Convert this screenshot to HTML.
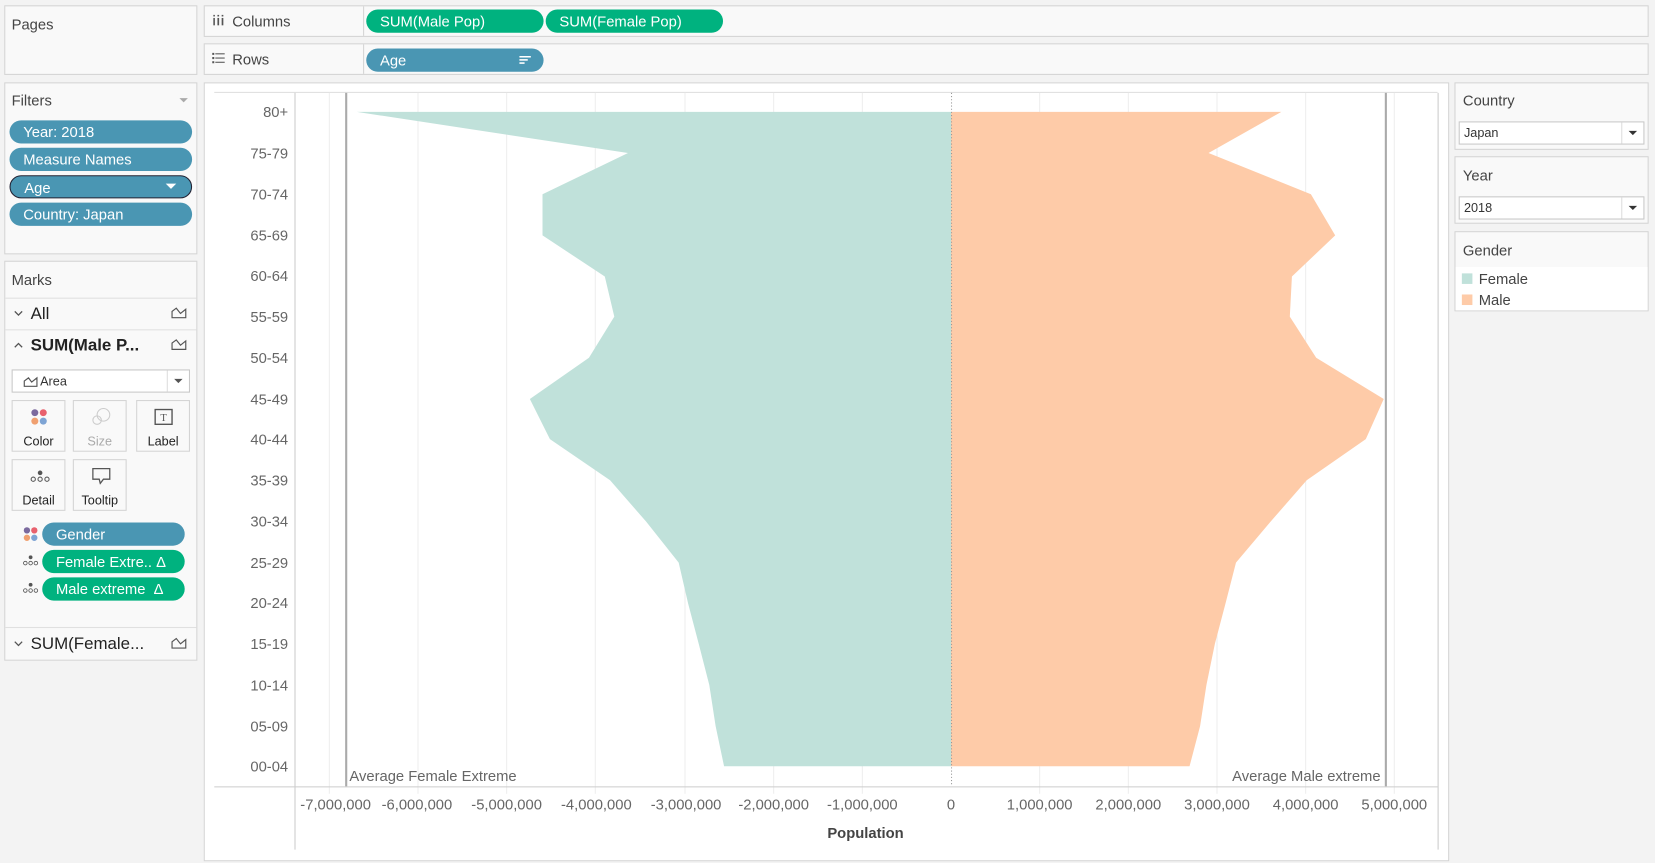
<!DOCTYPE html>
<html><head><meta charset="utf-8"><style>
html,body{margin:0;padding:0;background:#f3f3f3;overflow:hidden;width:1655px;height:863px}
#w{position:absolute;left:0;top:0;width:1568px;height:818px;transform:scale(1.05549);transform-origin:0 0;font-family:"Liberation Sans",sans-serif;color:#333}
.a{position:absolute}
.p{position:absolute;background:#f9f9f9;border:1px solid #d4d4d4;box-sizing:border-box}
.t{position:absolute;font-size:14px;color:#444}
.pill{position:absolute;height:22px;border-radius:11px;color:#fff;font-size:14px;line-height:22px;padding-left:13px;box-sizing:border-box;white-space:nowrap}
.b{background:#4a96b3}.g{background:#00b27f}
.row{position:absolute;left:0;right:0;border-top:1px solid #e0e0e0;font-size:16px;color:#222}
.btn{position:absolute;width:51px;height:49px;border:1px solid #d4d4d4;box-sizing:border-box;font-size:12px;text-align:center;color:#222}
.lab{position:absolute;font-size:14px;color:#666;width:60px;text-align:right}
.tk{position:absolute;font-size:14px;color:#666;top:754px;width:100px;text-align:center}
.dd{position:absolute;background:#fff;border:1px solid #c8c8c8;height:22px;box-sizing:border-box;font-size:12px;line-height:20px;padding-left:4px}
.ai{position:absolute;right:9px}
</style></head><body><div id="w">
<div class="p" style="left:4px;top:5px;width:183px;height:66px"><div class="t" style="left:6px;top:9px">Pages</div></div>
<div class="p" style="left:193px;top:5px;width:1369px;height:30px">
 <div class="a" style="left:150px;top:0;width:1px;height:28px;background:#d4d4d4"></div>
 <svg class="a" style="left:8px;top:8px" width="10" height="11"><g fill="#555"><rect x="0" y="0" width="1.6" height="1.6"/><rect x="4" y="0" width="1.6" height="1.6"/><rect x="8" y="0" width="1.6" height="1.6"/><rect x="0" y="3" width="1.6" height="7"/><rect x="4" y="3" width="1.6" height="7"/><rect x="8" y="3" width="1.6" height="7"/></g></svg>
 <div class="t" style="left:26px;top:6px">Columns</div>
 <div class="pill g" style="left:153px;top:3px;width:168px">SUM(Male Pop)</div>
 <div class="pill g" style="left:323px;top:3px;width:168px">SUM(Female Pop)</div>
</div>
<div class="p" style="left:193px;top:41px;width:1369px;height:30px">
 <div class="a" style="left:150px;top:0;width:1px;height:28px;background:#d4d4d4"></div>
 <svg class="a" style="left:7px;top:8px" width="12" height="10"><g fill="#555"><rect x="0" y="0" width="2" height="2"/><rect x="3" y="0.5" width="9" height="1"/><rect x="0" y="4" width="2" height="2"/><rect x="3" y="4.5" width="9" height="1"/><rect x="0" y="8" width="2" height="2"/><rect x="3" y="8.5" width="9" height="1"/></g></svg>
 <div class="t" style="left:26px;top:6px">Rows</div>
 <div class="pill b" style="left:153px;top:4px;width:168px">Age<svg class="a" style="right:12px;top:7px" width="11" height="8"><g fill="#fff"><rect x="0" y="0" width="11" height="1.5"/><rect x="0" y="3" width="8" height="1.5"/><rect x="0" y="6" width="5" height="1.5"/></g></svg></div>
</div>
<div class="p" style="left:4px;top:78px;width:183px;height:163px">
 <div class="t" style="left:6px;top:8px">Filters</div>
 <div class="a" style="right:8px;top:14px;border:4px solid transparent;border-top-color:#aaa"></div>
 <div class="pill b" style="left:4px;top:35px;width:173px">Year: 2018</div>
 <div class="pill b" style="left:4px;top:61px;width:173px">Measure Names</div>
 <div class="pill b" style="left:4px;top:87px;width:173px;border:1px solid #223">Age<span style="position:absolute;right:14px;top:7px;border:5px solid transparent;border-top-color:#fff"></span></div>
 <div class="pill b" style="left:4px;top:113px;width:173px">Country: Japan</div>
</div>
<div class="p" style="left:4px;top:247px;width:183px;height:379px">
 <div class="t" style="left:6px;top:9px">Marks</div>
 <div class="row" style="top:34px;height:28px"><svg class="a" style="left:8px;top:11px" width="9" height="6"><path d="M1 1L4.5 4.5L8 1" fill="none" stroke="#555" stroke-width="1.2"/></svg><span class="a" style="left:24px;top:6px">All</span><svg class="ai" style="top:7px" width="15" height="12"><path d="M1 11V5L5 2L9 7L14 3V11Z" fill="none" stroke="#555" stroke-width="1.1"/></svg></div>
 <div class="row" style="top:64px;height:28px"><svg class="a" style="left:8px;top:11px" width="9" height="6"><path d="M1 5L4.5 1.5L8 5" fill="none" stroke="#555" stroke-width="1.2"/></svg><span class="a" style="left:24px;top:6px;font-weight:bold">SUM(Male P...</span><svg class="ai" style="top:7px" width="15" height="12"><path d="M1 11V5L5 2L9 7L14 3V11Z" fill="none" stroke="#555" stroke-width="1.1"/></svg></div>
 <div class="dd" style="left:6px;top:102px;width:169px;padding-left:26px">Area<svg class="a" style="left:10px;top:5px" width="14" height="11"><path d="M1 10V5L5 2L8 6L13 2V10Z" fill="none" stroke="#555" stroke-width="1.1"/></svg><span style="position:absolute;right:0;top:0;width:20px;height:20px;border-left:1px solid #ddd"><span style="position:absolute;left:6px;top:8px;border:4px solid transparent;border-top-color:#555"></span></span></div>
 <div class="btn" style="left:6px;top:131px"><svg class="a" style="left:17px;top:7px" width="16" height="16"><circle cx="4" cy="4" r="3.3" fill="#7b6a9e"/><circle cx="12" cy="4" r="3.3" fill="#e8616e"/><circle cx="4" cy="12" r="3.3" fill="#f0a070"/><circle cx="12" cy="12" r="3.3" fill="#7ea4d4"/></svg><span class="a" style="left:0;right:0;top:31px">Color</span></div>
 <div class="btn" style="left:64px;top:131px;color:#aaa"><svg class="a" style="left:16px;top:6px" width="20" height="18"><circle cx="12" cy="7" r="6" fill="none" stroke="#ccc"/><circle cx="6" cy="12" r="4" fill="none" stroke="#ccc"/></svg><span class="a" style="left:0;right:0;top:31px">Size</span></div>
 <div class="btn" style="left:124px;top:131px"><svg class="a" style="left:16px;top:7px" width="18" height="16"><rect x="1" y="1" width="16" height="14" fill="none" stroke="#555" stroke-width="1.3"/><text x="9" y="12" font-size="10" text-anchor="middle" font-family="Liberation Serif" fill="#555">T</text></svg><span class="a" style="left:0;right:0;top:31px">Label</span></div>
 <div class="btn" style="left:6px;top:187px"><svg class="a" style="left:16px;top:9px" width="20" height="12"><circle cx="10" cy="3" r="2.2" fill="#555"/><circle cx="3.5" cy="9" r="2" fill="none" stroke="#555"/><circle cx="10" cy="9" r="2" fill="none" stroke="#555"/><circle cx="16.5" cy="9" r="2" fill="none" stroke="#555"/></svg><span class="a" style="left:0;right:0;top:31px">Detail</span></div>
 <div class="btn" style="left:64px;top:187px"><svg class="a" style="left:17px;top:7px" width="18" height="16"><path d="M1 1H17V11H11L8 15L7 11H1Z" fill="none" stroke="#555" stroke-width="1.2"/></svg><span class="a" style="left:0;right:0;top:31px">Tooltip</span></div>
 <svg class="a" style="left:17px;top:251px" width="14" height="14"><circle cx="3.5" cy="3.5" r="3" fill="#7b6a9e"/><circle cx="10.5" cy="3.5" r="3" fill="#e8616e"/><circle cx="3.5" cy="10.5" r="3" fill="#f0a070"/><circle cx="10.5" cy="10.5" r="3" fill="#7ea4d4"/></svg>
 <div class="pill b" style="left:35px;top:247px;width:135px">Gender</div>
 <svg class="a" style="left:16px;top:278px" width="16" height="10"><circle cx="8" cy="2" r="1.8" fill="#555"/><circle cx="3" cy="7.5" r="1.7" fill="none" stroke="#555" stroke-width=".8"/><circle cx="8" cy="7.5" r="1.7" fill="none" stroke="#555" stroke-width=".8"/><circle cx="13" cy="7.5" r="1.7" fill="none" stroke="#555" stroke-width=".8"/></svg>
 <div class="pill g" style="left:35px;top:273px;width:135px">Female Extre.. &#916;</div>
 <svg class="a" style="left:16px;top:304px" width="16" height="10"><circle cx="8" cy="2" r="1.8" fill="#555"/><circle cx="3" cy="7.5" r="1.7" fill="none" stroke="#555" stroke-width=".8"/><circle cx="8" cy="7.5" r="1.7" fill="none" stroke="#555" stroke-width=".8"/><circle cx="13" cy="7.5" r="1.7" fill="none" stroke="#555" stroke-width=".8"/></svg>
 <div class="pill g" style="left:35px;top:299px;width:135px">Male extreme &nbsp;&#916;</div>
 <div class="row" style="top:346px;height:30px"><svg class="a" style="left:8px;top:12px" width="9" height="6"><path d="M1 1L4.5 4.5L8 1" fill="none" stroke="#555" stroke-width="1.2"/></svg><span class="a" style="left:24px;top:7px">SUM(Female...</span><svg class="ai" style="top:8px" width="15" height="12"><path d="M1 11V5L5 2L9 7L14 3V11Z" fill="none" stroke="#555" stroke-width="1.1"/></svg></div>
</div>
<div class="a" style="left:193px;top:78px;width:1180px;height:738px;background:#fff;border:1px solid #d4d4d4;box-sizing:border-box"></div>
<svg class="a" style="left:0;top:0" width="1568" height="818">
 <line x1="203" y1="87.5" x2="1362" y2="87.5" stroke="#ddd"/>
 <line x1="279.5" y1="88" x2="279.5" y2="805" stroke="#ccc"/>
 <line x1="1362.5" y1="88" x2="1362.5" y2="805" stroke="#ccc"/>
 <g stroke="#eee">
  <line x1="312" y1="88" x2="312" y2="752"/><line x1="396" y1="88" x2="396" y2="752"/><line x1="480" y1="88" x2="480" y2="752"/><line x1="564" y1="88" x2="564" y2="752"/><line x1="649" y1="88" x2="649" y2="752"/><line x1="733" y1="88" x2="733" y2="752"/><line x1="817" y1="88" x2="817" y2="752"/><line x1="985" y1="88" x2="985" y2="752"/><line x1="1069" y1="88" x2="1069" y2="752"/><line x1="1153" y1="88" x2="1153" y2="752"/><line x1="1237" y1="88" x2="1237" y2="752"/><line x1="1321" y1="88" x2="1321" y2="752"/>
 </g>
 <polygon fill="#c0e1da" points="901,106 338,106 595,145 514,184 514,223 573,262 582,300 558,339 502,378 521,416 578,455 612,494 643,533 652,572 662,610 672,649 678,688 686,726 901,726"/>
 <polygon fill="#fecba8" points="901,106 1214,106 1145,145 1242,184 1265,223 1224,262 1222,300 1247,339 1311,378 1294,416 1238,455 1204,494 1171,533 1161,572 1151,610 1143,649 1137,688 1127,726 901,726"/>
 <line x1="901.5" y1="88" x2="901.5" y2="745" stroke="#999" stroke-dasharray="1,2"/>
 <line x1="328" y1="88" x2="328" y2="745" stroke="#aaa" stroke-width="2"/>
 <line x1="1313" y1="88" x2="1313" y2="745" stroke="#aaa" stroke-width="2"/>
 <line x1="203" y1="745.5" x2="1362" y2="745.5" stroke="#ccc"/>
</svg>
<div class="lab" style="left:213px;top:98px">80+</div><div class="lab" style="left:213px;top:137px">75-79</div><div class="lab" style="left:213px;top:176px">70-74</div><div class="lab" style="left:213px;top:215px">65-69</div><div class="lab" style="left:213px;top:253px">60-64</div><div class="lab" style="left:213px;top:292px">55-59</div><div class="lab" style="left:213px;top:331px">50-54</div><div class="lab" style="left:213px;top:370px">45-49</div><div class="lab" style="left:213px;top:408px">40-44</div><div class="lab" style="left:213px;top:447px">35-39</div><div class="lab" style="left:213px;top:486px">30-34</div><div class="lab" style="left:213px;top:525px">25-29</div><div class="lab" style="left:213px;top:563px">20-24</div><div class="lab" style="left:213px;top:602px">15-19</div><div class="lab" style="left:213px;top:641px">10-14</div><div class="lab" style="left:213px;top:680px">05-09</div><div class="lab" style="left:213px;top:718px">00-04</div>
<div class="a" style="left:331px;top:727px;font-size:14px;color:#666">Average Female Extreme</div>
<div class="a" style="left:1108px;top:727px;width:200px;text-align:right;font-size:14px;color:#666">Average Male extreme</div>
<div class="tk" style="left:268px">-7,000,000</div><div class="tk" style="left:345px">-6,000,000</div><div class="tk" style="left:430px">-5,000,000</div><div class="tk" style="left:515px">-4,000,000</div><div class="tk" style="left:600px">-3,000,000</div><div class="tk" style="left:683px">-2,000,000</div><div class="tk" style="left:767px">-1,000,000</div><div class="tk" style="left:851px">0</div><div class="tk" style="left:935px">1,000,000</div><div class="tk" style="left:1019px">2,000,000</div><div class="tk" style="left:1103px">3,000,000</div><div class="tk" style="left:1187px">4,000,000</div><div class="tk" style="left:1271px">5,000,000</div>
<div class="a" style="left:770px;top:781px;width:100px;text-align:center;font-size:14px;font-weight:bold;color:#444">Population</div>
<div class="p" style="left:1378px;top:78px;width:184px;height:64px"><div class="t" style="left:7px;top:8px">Country</div><div class="dd" style="left:3px;top:36px;width:176px">Japan<span style="position:absolute;right:0;top:0;width:20px;height:20px;border-left:1px solid #ddd"><span style="position:absolute;left:6px;top:8px;border:4px solid transparent;border-top-color:#333"></span></span></div></div>
<div class="p" style="left:1378px;top:148px;width:184px;height:64px"><div class="t" style="left:7px;top:9px">Year</div><div class="dd" style="left:3px;top:37px;width:176px">2018<span style="position:absolute;right:0;top:0;width:20px;height:20px;border-left:1px solid #ddd"><span style="position:absolute;left:6px;top:8px;border:4px solid transparent;border-top-color:#333"></span></span></div></div>
<div class="p" style="left:1378px;top:219px;width:184px;height:76px"><div class="t" style="left:7px;top:9px">Gender</div>
 <div class="a" style="left:0;right:0;top:33px;bottom:0;background:#fff"></div>
 <div class="a" style="left:6px;top:39px;width:10px;height:10px;background:#c0e1da"></div><div class="t" style="left:22px;top:36px">Female</div>
 <div class="a" style="left:6px;top:59px;width:10px;height:10px;background:#fecba8"></div><div class="t" style="left:22px;top:56px">Male</div>
</div>
</div></body></html>
